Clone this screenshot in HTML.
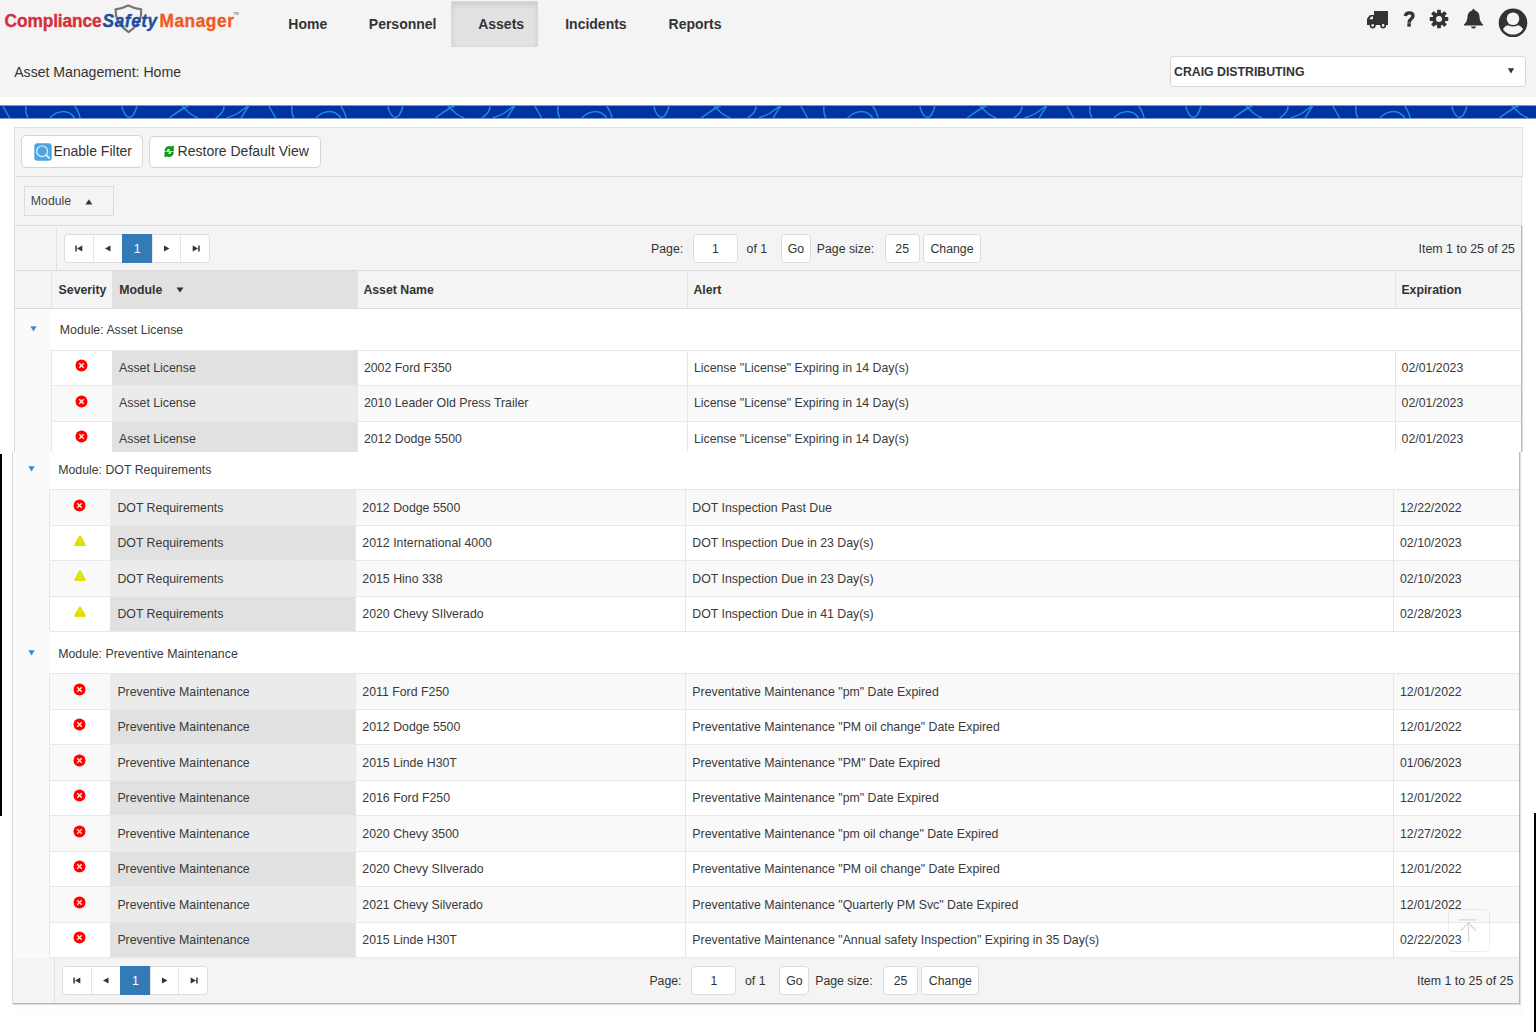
<!DOCTYPE html>
<html><head><meta charset="utf-8"><style>
html,body{margin:0;padding:0;width:1536px;height:1032px;overflow:hidden;background:#fff;}
.t{position:absolute;white-space:nowrap;line-height:20px;font-family:"Liberation Sans", sans-serif;}
.b{position:absolute;}
.seg{position:absolute;left:0;width:1536px;overflow:hidden;}
.inner{position:absolute;left:0;top:0;width:1536px;height:1100px;}
</style></head><body>
<div class="seg" style="top:0;height:452px">
<div class="inner">
<div class="b" style="left:0px;top:0px;width:1536px;height:97px;background:#f4f4f4"></div>
<svg class="b" style="left:112px;top:3px" width="34" height="33" viewBox="0 0 34 33">
<path d="M3.6 6.4 Q10 5.6 16.2 2.5 Q22.5 5.6 29.2 6.4 L29 12 Q28 21 16.6 29.2 Q5.2 21 4 12 Z" fill="none" stroke="#767676" stroke-width="2.2" stroke-linejoin="round"/>
</svg>
<div class="t " style="left:4.60px;top:11.11px;font-size:17.3px;font-weight:700;color:#d42f3d;letter-spacing:-0.1px;-webkit-text-stroke:0.35px #d42f3d;transform:scaleY(1.06);transform-origin:0 16px">Compliance</div>
<div class="t " style="left:102.60px;top:11.11px;font-size:17.3px;font-weight:700;color:#1d4f9f;font-style:italic;letter-spacing:0.55px;-webkit-text-stroke:0.35px #1d4f9f;transform:scaleY(1.06);transform-origin:0 16px">Safety</div>
<div class="t " style="left:159.50px;top:11.11px;font-size:17.3px;font-weight:700;color:#f05a23;letter-spacing:0.55px;-webkit-text-stroke:0.35px #f05a23;transform:scaleY(1.06);transform-origin:0 16px">Manager</div>
<div class="t " style="left:233.20px;top:4.28px;font-size:3.8px;font-weight:700;color:#888;">TM</div>
<div class="b" style="left:451px;top:1px;width:87px;height:46px;background:#e2e2e2;border:1px solid #dadada;box-sizing:border-box;box-shadow:inset 0 3px 5px rgba(0,0,0,0.1)"></div>
<div class="t " style="left:288.30px;top:14.05px;font-size:14px;font-weight:700;color:#333;">Home</div>
<div class="t " style="left:368.80px;top:14.05px;font-size:14px;font-weight:700;color:#333;">Personnel</div>
<div class="t " style="left:478.20px;top:14.05px;font-size:14px;font-weight:700;color:#333;">Assets</div>
<div class="t " style="left:565.20px;top:14.05px;font-size:14px;font-weight:700;color:#333;">Incidents</div>
<div class="t " style="left:668.60px;top:14.05px;font-size:14px;font-weight:700;color:#333;">Reports</div>
<svg class="b" style="left:1366px;top:10px" width="23" height="20" viewBox="0 0 23 20">
<path fill="#333" d="M8 1 H22 V15 H8 Z"/>
<path fill="#333" d="M8.5 5 H5 Q4 5 3.3 5.8 L1.2 8.5 Q1 9 1 9.6 V15 H8.5 Z"/>
<path fill="#f4f4f4" d="M7 6.6 H5.3 L3.2 9.3 H7 Z"/>
<circle cx="6.7" cy="15.4" r="3" fill="#333"/><circle cx="6.7" cy="15.4" r="1.3" fill="#f4f4f4"/>
<circle cx="17.1" cy="15.4" r="3" fill="#333"/><circle cx="17.1" cy="15.4" r="1.3" fill="#f4f4f4"/>
</svg>
<svg class="b" style="left:1403px;top:11px" width="13" height="17" viewBox="0 0 13 17">
<path fill="none" stroke="#333" stroke-width="3.4" d="M2.3 5 Q3 1.9 6.4 1.9 Q10 1.9 10 4.8 Q10 6.6 8.2 7.8 Q6.1 9.2 6.1 11.8"/>
<rect x="4.35" y="12.2" width="3.5" height="3.4" fill="#333"/>
</svg>
<svg class="b" style="left:1429px;top:9px" width="20" height="20" viewBox="0 0 20 20">
<g fill="#333" transform="translate(10 10)">
<circle r="6.6"/>
<rect x="-1.9" y="-9.3" width="3.8" height="18.6" rx="0.6"/>
<rect x="-1.9" y="-9.3" width="3.8" height="18.6" rx="0.6" transform="rotate(45)"/>
<rect x="-1.9" y="-9.3" width="3.8" height="18.6" rx="0.6" transform="rotate(90)"/>
<rect x="-1.9" y="-9.3" width="3.8" height="18.6" rx="0.6" transform="rotate(135)"/>
</g>
<circle cx="10" cy="10" r="3" fill="#f4f4f4"/>
</svg>
<svg class="b" style="left:1463px;top:8px" width="21" height="23" viewBox="0 0 21 23">
<path fill="#333" d="M10.5 0.8 Q11.6 0.8 11.8 2.4 Q16.3 3.6 16.5 8.5 Q16.6 13.6 20 16.6 V17.6 H1 V16.6 Q4.4 13.6 4.5 8.5 Q4.7 3.6 9.2 2.4 Q9.4 0.8 10.5 0.8 Z"/>
<path fill="#333" d="M8 18.4 H13 Q12.6 20.6 10.5 20.6 Q8.4 20.6 8 18.4 Z"/>
</svg>
<svg class="b" style="left:1498px;top:8px" width="30" height="30" viewBox="0 0 30 30">
<defs><clipPath id="uc"><circle cx="15" cy="14.8" r="11.8"/></clipPath></defs>
<circle cx="15" cy="14.8" r="14.3" fill="#333"/>
<g clip-path="url(#uc)">
<circle cx="15" cy="14.8" r="11.8" fill="#333"/>
<path fill="#f4f4f4" d="M3 30 Q3.5 18.5 10 17.2 Q15 19.6 20 17.2 Q26.5 18.5 27 30 Z"/>
</g>
<circle cx="15" cy="10.8" r="6.3" fill="#f4f4f4"/>
</svg>
<div class="t " style="left:14.20px;top:61.91px;font-size:14.1px;font-weight:400;color:#333;">Asset Management: Home</div>
<div class="b" style="left:1170px;top:56px;width:356px;height:31px;background:#fff;border:1px solid #d9d9d9;border-radius:3px;box-sizing:border-box"></div>
<div class="t " style="left:1174.00px;top:62.04px;font-size:12.3px;font-weight:700;color:#333;">CRAIG DISTRIBUTING</div>
<svg class="b" style="left:1507px;top:68px" width="8" height="6" viewBox="0 0 8 6"><path d="M0.8 0.3 H7.2 L4 5.6 Z" fill="#333"/></svg>
<svg class="b" style="left:0;top:105px" width="1536" height="14" viewBox="0 0 1536 14">
<defs><pattern id="bp" x="0" y="0" width="266" height="14" patternUnits="userSpaceOnUse">
<g fill="none" stroke="#2088e0" stroke-width="1.5">
<path d="M2.3 0 L9.6 13"/>
<path d="M26.3 0 Q24.6 6 27.8 13"/>
<path d="M49.7 13 Q56 6.6 63.8 6.6 Q70 6.6 74.7 13"/>
<path d="M74.3 0 Q78.5 6 80.2 13"/>
<path d="M121.7 0 Q123 8 127 11.5 Q130 13.5 133 10.5 Q136 6 137.2 0"/>
<path d="M169.2 13 Q178 6.5 184.7 2.5 L190.2 0"/>
<path d="M181 0 Q186 5 190 8.5 Q194 11.5 198.4 13"/>
<path d="M223.9 0 Q225 7 215.7 13"/>
<path d="M226.6 13 Q236 10 241 6 Q246 2.5 249.4 0"/>
<path d="M241.2 13 Q245 6 249.4 0"/>
</g></pattern></defs>
<rect x="0" y="0.5" width="1536" height="13" fill="#0033a0"/>
<rect x="0" y="0.5" width="1536" height="13" fill="url(#bp)"/>
</svg>
<div class="b" style="left:14px;top:127px;width:1509px;height:50px;background:#f4f4f4;border:1px solid #e2e2e2;border-bottom-color:#dcdcdc;box-sizing:border-box"></div>
<div class="b" style="left:21px;top:135px;width:122px;height:33px;background:#fff;border:1px solid #d4d4d4;border-radius:5px;box-sizing:border-box"></div>
<svg class="b" style="left:34px;top:143px" width="18" height="18" viewBox="0 0 18 18">
    <rect x="0.3" y="0.3" width="17.4" height="17.4" rx="3" fill="#4aa5e0"/>
    <circle cx="8.1" cy="8.3" r="5.4" fill="none" stroke="#cfe8f7" stroke-width="1.4"/>
    <path d="M12 12 L15.2 15" stroke="#d8ecf8" stroke-width="1.8" stroke-linecap="round"/>
    </svg>
<div class="t " style="left:53.40px;top:141.45px;font-size:14.0px;font-weight:400;color:#333;">Enable Filter</div>
<div class="b" style="left:149px;top:136px;width:172px;height:32px;background:#fff;border:1px solid #d4d4d4;border-radius:5px;box-sizing:border-box"></div>
<svg class="b" style="left:164px;top:145px" width="11" height="13" viewBox="0 0 11 13">
    <path d="M0.5 6.3 Q0.6 1.2 5.2 0.9 Q6.3 0.9 7 1.4 L9.8 0.6 V6.1 H4.6 L6.1 4.3 Q5.4 3.7 4.8 3.8 Q3 4 2.8 6.3 Z" fill="#0d9c14"/>
    <path d="M9.8 6.6 Q9.7 11.7 5.1 12 Q4 12 3.3 11.5 L0.5 12.3 V6.8 H5.7 L4.2 8.6 Q4.9 9.2 5.5 9.1 Q7.3 8.9 7.5 6.6 Z" fill="#0d9c14"/>
    </svg>
<div class="t " style="left:177.60px;top:141.45px;font-size:14.0px;font-weight:400;color:#333;">Restore Default View</div>
<div class="b" style="left:14px;top:177px;width:1508px;height:49px;background:#f4f4f4;border-left:1px solid #e2e2e2;border-right:1px solid #e6e6e6;box-sizing:border-box"></div>
<div class="b" style="left:24px;top:186px;width:90px;height:30px;background:#f4f4f4;border:1px solid #dcdcdc;box-sizing:border-box"></div>
<div class="t " style="left:30.80px;top:190.54px;font-size:12.3px;font-weight:400;color:#444;">Module</div>
<svg class="b" style="left:85px;top:199px" width="8" height="6" viewBox="0 0 8 6"><path d="M0.5 5.4 H7.3 L3.9 0.3 Z" fill="#333"/></svg>
<div class="b" style="left:14px;top:225px;width:1508px;height:788px;background:#fff;border:1px solid #dcdcdc;border-right-color:#b8b8b8;border-bottom-color:#b8b8b8;box-sizing:border-box;box-shadow:1px 1px 1px rgba(0,0,0,0.12)"></div>
<div class="b" style="left:15px;top:226px;width:1506px;height:44px;background:#f4f4f4"></div>
<div class="b" style="left:56px;top:227px;width:1px;height:43px;background:#e2e2e2"></div>
<div class="b" style="left:64px;top:234px;width:146px;height:29px;background:#fff;border:1px solid #dcdcdc;border-radius:4px;box-sizing:border-box"></div>
<div class="b" style="left:93px;top:235px;width:1px;height:27px;background:#e4e4e4"></div>
<div class="b" style="left:122px;top:235px;width:1px;height:27px;background:#e4e4e4"></div>
<div class="b" style="left:152px;top:235px;width:1px;height:27px;background:#e4e4e4"></div>
<div class="b" style="left:180px;top:235px;width:1px;height:27px;background:#e4e4e4"></div>
<div class="b" style="left:122px;top:234px;width:30px;height:29px;background:#337ab7"></div>
<svg class="b" style="left:75px;top:245.0px" width="8" height="7" viewBox="0 0 8 7"><rect x="0.3" y="0.5" width="1.5" height="6" fill="#333"/><path d="M7.3 0.5 V6.5 L2 3.5 Z" fill="#333"/></svg>
<svg class="b" style="left:104px;top:245.0px" width="8" height="7" viewBox="0 0 8 7"><path d="M6.5 0.5 V6.5 L1 3.5 Z" fill="#333"/></svg>
<svg class="b" style="left:162.5px;top:245.0px" width="8" height="7" viewBox="0 0 8 7"><path d="M1 0.5 V6.5 L6.5 3.5 Z" fill="#333"/></svg>
<svg class="b" style="left:191.5px;top:245.0px" width="9" height="7" viewBox="0 0 9 7"><path d="M0.7 0.5 V6.5 L6 3.5 Z" fill="#333"/><rect x="6.2" y="0.5" width="1.5" height="6" fill="#333"/></svg>
<div class="t" style="left:37.10px;width:200px;text-align:center;top:238.54px;font-size:12.3px;font-weight:400;color:#fff;">1</div>
<div class="t " style="left:651.00px;top:238.54px;font-size:12.3px;font-weight:400;color:#333;">Page:</div>
<div class="b" style="left:693px;top:234px;width:45px;height:29px;background:#fff;border:1px solid #dcdcdc;border-radius:4px;box-sizing:border-box"></div>
<div class="t" style="left:615.50px;width:200px;text-align:center;top:238.54px;font-size:12.3px;font-weight:400;color:#333;">1</div>
<div class="t " style="left:746.60px;top:238.54px;font-size:12.3px;font-weight:400;color:#333;">of 1</div>
<div class="b" style="left:781px;top:234px;width:30px;height:29px;background:#fff;border:1px solid #dcdcdc;border-radius:4px;box-sizing:border-box"></div>
<div class="t" style="left:696.00px;width:200px;text-align:center;top:238.54px;font-size:12.3px;font-weight:400;color:#333;">Go</div>
<div class="t " style="left:816.80px;top:238.54px;font-size:12.3px;font-weight:400;color:#333;">Page size:</div>
<div class="b" style="left:885px;top:234px;width:35px;height:29px;background:#fff;border:1px solid #dcdcdc;border-radius:4px;box-sizing:border-box"></div>
<div class="t" style="left:802.20px;width:200px;text-align:center;top:238.54px;font-size:12.3px;font-weight:400;color:#333;">25</div>
<div class="b" style="left:923px;top:234px;width:58px;height:29px;background:#fff;border:1px solid #dcdcdc;border-radius:4px;box-sizing:border-box"></div>
<div class="t" style="left:852.00px;width:200px;text-align:center;top:238.54px;font-size:12.3px;font-weight:400;color:#333;">Change</div>
<div class="t" style="right:21.00px;top:238.50px;font-size:12.4px;font-weight:400;color:#333;">Item 1 to 25 of 25</div>
<div class="b" style="left:15px;top:270px;width:1506px;height:1px;background:#dcdcdc"></div>
<div class="b" style="left:15px;top:271px;width:1506px;height:37px;background:#f4f4f4"></div>
<div class="b" style="left:112px;top:271px;width:245px;height:37px;background:#e1e1e1"></div>
<div class="b" style="left:51px;top:271px;width:1px;height:37px;background:#e3e3e3"></div>
<div class="b" style="left:357px;top:271px;width:1px;height:37px;background:#e3e3e3"></div>
<div class="b" style="left:687px;top:271px;width:1px;height:37px;background:#e3e3e3"></div>
<div class="b" style="left:1395px;top:271px;width:1px;height:37px;background:#e3e3e3"></div>
<div class="b" style="left:15px;top:308px;width:1506px;height:1px;background:#dadada"></div>
<div class="t " style="left:58.60px;top:280.14px;font-size:12.3px;font-weight:700;color:#333;">Severity</div>
<div class="t " style="left:119.20px;top:280.14px;font-size:12.3px;font-weight:700;color:#333;">Module</div>
<svg class="b" style="left:176px;top:287px" width="8" height="6" viewBox="0 0 8 6"><path d="M0.5 0.5 H7.5 L4 5.6 Z" fill="#333"/></svg>
<div class="t " style="left:363.40px;top:280.14px;font-size:12.3px;font-weight:700;color:#333;">Asset Name</div>
<div class="t " style="left:693.40px;top:280.14px;font-size:12.3px;font-weight:700;color:#333;">Alert</div>
<div class="t " style="left:1401.40px;top:280.14px;font-size:12.3px;font-weight:700;color:#333;">Expiration</div>
<div class="b" style="left:15px;top:309px;width:36px;height:658px;background:#fafafa"></div>
<div class="b" style="left:52px;top:309px;width:1469px;height:41px;background:#fff"></div>
<div class="b" style="left:52px;top:350px;width:1469px;height:1px;background:#e6e6e6"></div>
<svg class="b" style="left:30px;top:326.2px" width="7" height="6" viewBox="0 0 7 6"><path d="M0.3 0.3 H6.7 L3.5 5.5 Z" fill="#428bca"/></svg>
<div class="t " style="left:59.80px;top:320.13px;font-size:12.33px;font-weight:400;color:#3a3a3a;">Module: Asset License</div>
<div class="b" style="left:52px;top:351px;width:1469px;height:34px;background:#fff"></div>
<div class="b" style="left:112px;top:351px;width:245px;height:34px;background:#e1e1e1"></div>
<div class="b" style="left:51px;top:350px;width:1px;height:35px;background:#e6e6e6"></div>
<div class="b" style="left:357px;top:350px;width:1px;height:35px;background:#e6e6e6"></div>
<div class="b" style="left:687px;top:350px;width:1px;height:35px;background:#e6e6e6"></div>
<div class="b" style="left:1395px;top:350px;width:1px;height:35px;background:#e6e6e6"></div>
<div class="b" style="left:52px;top:385px;width:1469px;height:1px;background:#e8e8e8"></div>
<svg class="b" style="left:75.0px;top:359.0px" width="13" height="13" viewBox="0 0 13 13"><circle cx="6.5" cy="6.5" r="6" fill="#ff0000"/><path d="M4.3 4.3 L8.7 8.7 M8.7 4.3 L4.3 8.7" stroke="#ffe8e8" stroke-width="1.4"/></svg>
<div class="t " style="left:119.00px;top:357.53px;font-size:12.33px;font-weight:400;color:#3a3a3a;">Asset License</div>
<div class="t " style="left:363.90px;top:357.53px;font-size:12.33px;font-weight:400;color:#3a3a3a;">2002 Ford F350</div>
<div class="t " style="left:693.90px;top:357.53px;font-size:12.33px;font-weight:400;color:#3a3a3a;">License "License" Expiring in 14 Day(s)</div>
<div class="t " style="left:1401.60px;top:357.53px;font-size:12.33px;font-weight:400;color:#3a3a3a;">02/01/2023</div>
<div class="b" style="left:52px;top:386px;width:1469px;height:35px;background:#f9f9f9"></div>
<div class="b" style="left:112px;top:386px;width:245px;height:35px;background:#ebebeb"></div>
<div class="b" style="left:51px;top:385px;width:1px;height:36px;background:#e6e6e6"></div>
<div class="b" style="left:357px;top:385px;width:1px;height:36px;background:#e6e6e6"></div>
<div class="b" style="left:687px;top:385px;width:1px;height:36px;background:#e6e6e6"></div>
<div class="b" style="left:1395px;top:385px;width:1px;height:36px;background:#e6e6e6"></div>
<div class="b" style="left:52px;top:421px;width:1469px;height:1px;background:#e8e8e8"></div>
<svg class="b" style="left:75.0px;top:394.5px" width="13" height="13" viewBox="0 0 13 13"><circle cx="6.5" cy="6.5" r="6" fill="#ff0000"/><path d="M4.3 4.3 L8.7 8.7 M8.7 4.3 L4.3 8.7" stroke="#ffe8e8" stroke-width="1.4"/></svg>
<div class="t " style="left:119.00px;top:393.03px;font-size:12.33px;font-weight:400;color:#3a3a3a;">Asset License</div>
<div class="t " style="left:363.90px;top:393.03px;font-size:12.33px;font-weight:400;color:#3a3a3a;">2010 Leader Old Press Trailer</div>
<div class="t " style="left:693.90px;top:393.03px;font-size:12.33px;font-weight:400;color:#3a3a3a;">License "License" Expiring in 14 Day(s)</div>
<div class="t " style="left:1401.60px;top:393.03px;font-size:12.33px;font-weight:400;color:#3a3a3a;">02/01/2023</div>
<div class="b" style="left:52px;top:422px;width:1469px;height:34px;background:#fff"></div>
<div class="b" style="left:112px;top:422px;width:245px;height:34px;background:#e1e1e1"></div>
<div class="b" style="left:51px;top:421px;width:1px;height:35px;background:#e6e6e6"></div>
<div class="b" style="left:357px;top:421px;width:1px;height:35px;background:#e6e6e6"></div>
<div class="b" style="left:687px;top:421px;width:1px;height:35px;background:#e6e6e6"></div>
<div class="b" style="left:1395px;top:421px;width:1px;height:35px;background:#e6e6e6"></div>
<div class="b" style="left:52px;top:456px;width:1469px;height:1px;background:#e8e8e8"></div>
<svg class="b" style="left:75.0px;top:430.0px" width="13" height="13" viewBox="0 0 13 13"><circle cx="6.5" cy="6.5" r="6" fill="#ff0000"/><path d="M4.3 4.3 L8.7 8.7 M8.7 4.3 L4.3 8.7" stroke="#ffe8e8" stroke-width="1.4"/></svg>
<div class="t " style="left:119.00px;top:428.53px;font-size:12.33px;font-weight:400;color:#3a3a3a;">Asset License</div>
<div class="t " style="left:363.90px;top:428.53px;font-size:12.33px;font-weight:400;color:#3a3a3a;">2012 Dodge 5500</div>
<div class="t " style="left:693.90px;top:428.53px;font-size:12.33px;font-weight:400;color:#3a3a3a;">License "License" Expiring in 14 Day(s)</div>
<div class="t " style="left:1401.60px;top:428.53px;font-size:12.33px;font-weight:400;color:#3a3a3a;">02/01/2023</div>
<div class="b" style="left:52px;top:457px;width:1469px;height:41px;background:#fff"></div>
<div class="b" style="left:52px;top:498px;width:1469px;height:1px;background:#e6e6e6"></div>
<svg class="b" style="left:30px;top:474.7px" width="7" height="6" viewBox="0 0 7 6"><path d="M0.3 0.3 H6.7 L3.5 5.5 Z" fill="#428bca"/></svg>
<div class="t " style="left:59.80px;top:468.63px;font-size:12.33px;font-weight:400;color:#3a3a3a;">Module: DOT Requirements</div>
<div class="b" style="left:52px;top:499px;width:1469px;height:35px;background:#f9f9f9"></div>
<div class="b" style="left:112px;top:499px;width:245px;height:35px;background:#ebebeb"></div>
<div class="b" style="left:51px;top:498px;width:1px;height:36px;background:#e6e6e6"></div>
<div class="b" style="left:357px;top:498px;width:1px;height:36px;background:#e6e6e6"></div>
<div class="b" style="left:687px;top:498px;width:1px;height:36px;background:#e6e6e6"></div>
<div class="b" style="left:1395px;top:498px;width:1px;height:36px;background:#e6e6e6"></div>
<div class="b" style="left:52px;top:534px;width:1469px;height:1px;background:#e8e8e8"></div>
<svg class="b" style="left:75.0px;top:507.5px" width="13" height="13" viewBox="0 0 13 13"><circle cx="6.5" cy="6.5" r="6" fill="#ff0000"/><path d="M4.3 4.3 L8.7 8.7 M8.7 4.3 L4.3 8.7" stroke="#ffe8e8" stroke-width="1.4"/></svg>
<div class="t " style="left:119.00px;top:506.03px;font-size:12.33px;font-weight:400;color:#3a3a3a;">DOT Requirements</div>
<div class="t " style="left:363.90px;top:506.03px;font-size:12.33px;font-weight:400;color:#3a3a3a;">2012 Dodge 5500</div>
<div class="t " style="left:693.90px;top:506.03px;font-size:12.33px;font-weight:400;color:#3a3a3a;">DOT Inspection Past Due</div>
<div class="t " style="left:1401.60px;top:506.03px;font-size:12.33px;font-weight:400;color:#3a3a3a;">12/22/2022</div>
<div class="b" style="left:52px;top:535px;width:1469px;height:34px;background:#fff"></div>
<div class="b" style="left:112px;top:535px;width:245px;height:34px;background:#e1e1e1"></div>
<div class="b" style="left:51px;top:534px;width:1px;height:35px;background:#e6e6e6"></div>
<div class="b" style="left:357px;top:534px;width:1px;height:35px;background:#e6e6e6"></div>
<div class="b" style="left:687px;top:534px;width:1px;height:35px;background:#e6e6e6"></div>
<div class="b" style="left:1395px;top:534px;width:1px;height:35px;background:#e6e6e6"></div>
<div class="b" style="left:52px;top:569px;width:1469px;height:1px;background:#e8e8e8"></div>
<svg class="b" style="left:75.4px;top:543.6px" width="13" height="12" viewBox="0 0 13 12"><path d="M6 0.6 Q6.8 0.6 7.3 1.5 L11.6 9.2 Q12.4 10.9 10.6 10.9 H1.4 Q-0.4 10.9 0.4 9.2 L4.7 1.5 Q5.2 0.6 6 0.6 Z" fill="#e0e000"/><rect x="5.5" y="3.6" width="1" height="3.6" fill="#e8e860"/></svg>
<div class="t " style="left:119.00px;top:541.53px;font-size:12.33px;font-weight:400;color:#3a3a3a;">DOT Requirements</div>
<div class="t " style="left:363.90px;top:541.53px;font-size:12.33px;font-weight:400;color:#3a3a3a;">2012 International 4000</div>
<div class="t " style="left:693.90px;top:541.53px;font-size:12.33px;font-weight:400;color:#3a3a3a;">DOT Inspection Due in 23 Day(s)</div>
<div class="t " style="left:1401.60px;top:541.53px;font-size:12.33px;font-weight:400;color:#3a3a3a;">02/10/2023</div>
<div class="b" style="left:52px;top:570px;width:1469px;height:35px;background:#f9f9f9"></div>
<div class="b" style="left:112px;top:570px;width:245px;height:35px;background:#ebebeb"></div>
<div class="b" style="left:51px;top:569px;width:1px;height:36px;background:#e6e6e6"></div>
<div class="b" style="left:357px;top:569px;width:1px;height:36px;background:#e6e6e6"></div>
<div class="b" style="left:687px;top:569px;width:1px;height:36px;background:#e6e6e6"></div>
<div class="b" style="left:1395px;top:569px;width:1px;height:36px;background:#e6e6e6"></div>
<div class="b" style="left:52px;top:605px;width:1469px;height:1px;background:#e8e8e8"></div>
<svg class="b" style="left:75.4px;top:579.1px" width="13" height="12" viewBox="0 0 13 12"><path d="M6 0.6 Q6.8 0.6 7.3 1.5 L11.6 9.2 Q12.4 10.9 10.6 10.9 H1.4 Q-0.4 10.9 0.4 9.2 L4.7 1.5 Q5.2 0.6 6 0.6 Z" fill="#e0e000"/><rect x="5.5" y="3.6" width="1" height="3.6" fill="#e8e860"/></svg>
<div class="t " style="left:119.00px;top:577.03px;font-size:12.33px;font-weight:400;color:#3a3a3a;">DOT Requirements</div>
<div class="t " style="left:363.90px;top:577.03px;font-size:12.33px;font-weight:400;color:#3a3a3a;">2015 Hino 338</div>
<div class="t " style="left:693.90px;top:577.03px;font-size:12.33px;font-weight:400;color:#3a3a3a;">DOT Inspection Due in 23 Day(s)</div>
<div class="t " style="left:1401.60px;top:577.03px;font-size:12.33px;font-weight:400;color:#3a3a3a;">02/10/2023</div>
<div class="b" style="left:52px;top:606px;width:1469px;height:34px;background:#fff"></div>
<div class="b" style="left:112px;top:606px;width:245px;height:34px;background:#e1e1e1"></div>
<div class="b" style="left:51px;top:605px;width:1px;height:35px;background:#e6e6e6"></div>
<div class="b" style="left:357px;top:605px;width:1px;height:35px;background:#e6e6e6"></div>
<div class="b" style="left:687px;top:605px;width:1px;height:35px;background:#e6e6e6"></div>
<div class="b" style="left:1395px;top:605px;width:1px;height:35px;background:#e6e6e6"></div>
<div class="b" style="left:52px;top:640px;width:1469px;height:1px;background:#e8e8e8"></div>
<svg class="b" style="left:75.4px;top:614.6px" width="13" height="12" viewBox="0 0 13 12"><path d="M6 0.6 Q6.8 0.6 7.3 1.5 L11.6 9.2 Q12.4 10.9 10.6 10.9 H1.4 Q-0.4 10.9 0.4 9.2 L4.7 1.5 Q5.2 0.6 6 0.6 Z" fill="#e0e000"/><rect x="5.5" y="3.6" width="1" height="3.6" fill="#e8e860"/></svg>
<div class="t " style="left:119.00px;top:612.53px;font-size:12.33px;font-weight:400;color:#3a3a3a;">DOT Requirements</div>
<div class="t " style="left:363.90px;top:612.53px;font-size:12.33px;font-weight:400;color:#3a3a3a;">2020 Chevy SIlverado</div>
<div class="t " style="left:693.90px;top:612.53px;font-size:12.33px;font-weight:400;color:#3a3a3a;">DOT Inspection Due in 41 Day(s)</div>
<div class="t " style="left:1401.60px;top:612.53px;font-size:12.33px;font-weight:400;color:#3a3a3a;">02/28/2023</div>
<div class="b" style="left:52px;top:641px;width:1469px;height:41px;background:#fff"></div>
<div class="b" style="left:52px;top:682px;width:1469px;height:1px;background:#e6e6e6"></div>
<svg class="b" style="left:30px;top:658.7px" width="7" height="6" viewBox="0 0 7 6"><path d="M0.3 0.3 H6.7 L3.5 5.5 Z" fill="#428bca"/></svg>
<div class="t " style="left:59.80px;top:652.63px;font-size:12.33px;font-weight:400;color:#3a3a3a;">Module: Preventive Maintenance</div>
<div class="b" style="left:52px;top:683px;width:1469px;height:35px;background:#f9f9f9"></div>
<div class="b" style="left:112px;top:683px;width:245px;height:35px;background:#ebebeb"></div>
<div class="b" style="left:51px;top:682px;width:1px;height:36px;background:#e6e6e6"></div>
<div class="b" style="left:357px;top:682px;width:1px;height:36px;background:#e6e6e6"></div>
<div class="b" style="left:687px;top:682px;width:1px;height:36px;background:#e6e6e6"></div>
<div class="b" style="left:1395px;top:682px;width:1px;height:36px;background:#e6e6e6"></div>
<div class="b" style="left:52px;top:718px;width:1469px;height:1px;background:#e8e8e8"></div>
<svg class="b" style="left:75.0px;top:691.5px" width="13" height="13" viewBox="0 0 13 13"><circle cx="6.5" cy="6.5" r="6" fill="#ff0000"/><path d="M4.3 4.3 L8.7 8.7 M8.7 4.3 L4.3 8.7" stroke="#ffe8e8" stroke-width="1.4"/></svg>
<div class="t " style="left:119.00px;top:690.03px;font-size:12.33px;font-weight:400;color:#3a3a3a;">Preventive Maintenance</div>
<div class="t " style="left:363.90px;top:690.03px;font-size:12.33px;font-weight:400;color:#3a3a3a;">2011 Ford F250</div>
<div class="t " style="left:693.90px;top:690.03px;font-size:12.33px;font-weight:400;color:#3a3a3a;">Preventative Maintenance "pm" Date Expired</div>
<div class="t " style="left:1401.60px;top:690.03px;font-size:12.33px;font-weight:400;color:#3a3a3a;">12/01/2022</div>
<div class="b" style="left:52px;top:719px;width:1469px;height:34px;background:#fff"></div>
<div class="b" style="left:112px;top:719px;width:245px;height:34px;background:#e1e1e1"></div>
<div class="b" style="left:51px;top:718px;width:1px;height:35px;background:#e6e6e6"></div>
<div class="b" style="left:357px;top:718px;width:1px;height:35px;background:#e6e6e6"></div>
<div class="b" style="left:687px;top:718px;width:1px;height:35px;background:#e6e6e6"></div>
<div class="b" style="left:1395px;top:718px;width:1px;height:35px;background:#e6e6e6"></div>
<div class="b" style="left:52px;top:753px;width:1469px;height:1px;background:#e8e8e8"></div>
<svg class="b" style="left:75.0px;top:727.0px" width="13" height="13" viewBox="0 0 13 13"><circle cx="6.5" cy="6.5" r="6" fill="#ff0000"/><path d="M4.3 4.3 L8.7 8.7 M8.7 4.3 L4.3 8.7" stroke="#ffe8e8" stroke-width="1.4"/></svg>
<div class="t " style="left:119.00px;top:725.53px;font-size:12.33px;font-weight:400;color:#3a3a3a;">Preventive Maintenance</div>
<div class="t " style="left:363.90px;top:725.53px;font-size:12.33px;font-weight:400;color:#3a3a3a;">2012 Dodge 5500</div>
<div class="t " style="left:693.90px;top:725.53px;font-size:12.33px;font-weight:400;color:#3a3a3a;">Preventative Maintenance "PM oil change" Date Expired</div>
<div class="t " style="left:1401.60px;top:725.53px;font-size:12.33px;font-weight:400;color:#3a3a3a;">12/01/2022</div>
<div class="b" style="left:52px;top:754px;width:1469px;height:35px;background:#f9f9f9"></div>
<div class="b" style="left:112px;top:754px;width:245px;height:35px;background:#ebebeb"></div>
<div class="b" style="left:51px;top:753px;width:1px;height:36px;background:#e6e6e6"></div>
<div class="b" style="left:357px;top:753px;width:1px;height:36px;background:#e6e6e6"></div>
<div class="b" style="left:687px;top:753px;width:1px;height:36px;background:#e6e6e6"></div>
<div class="b" style="left:1395px;top:753px;width:1px;height:36px;background:#e6e6e6"></div>
<div class="b" style="left:52px;top:789px;width:1469px;height:1px;background:#e8e8e8"></div>
<svg class="b" style="left:75.0px;top:762.5px" width="13" height="13" viewBox="0 0 13 13"><circle cx="6.5" cy="6.5" r="6" fill="#ff0000"/><path d="M4.3 4.3 L8.7 8.7 M8.7 4.3 L4.3 8.7" stroke="#ffe8e8" stroke-width="1.4"/></svg>
<div class="t " style="left:119.00px;top:761.03px;font-size:12.33px;font-weight:400;color:#3a3a3a;">Preventive Maintenance</div>
<div class="t " style="left:363.90px;top:761.03px;font-size:12.33px;font-weight:400;color:#3a3a3a;">2015 Linde H30T</div>
<div class="t " style="left:693.90px;top:761.03px;font-size:12.33px;font-weight:400;color:#3a3a3a;">Preventative Maintenance "PM" Date Expired</div>
<div class="t " style="left:1401.60px;top:761.03px;font-size:12.33px;font-weight:400;color:#3a3a3a;">01/06/2023</div>
<div class="b" style="left:52px;top:790px;width:1469px;height:34px;background:#fff"></div>
<div class="b" style="left:112px;top:790px;width:245px;height:34px;background:#e1e1e1"></div>
<div class="b" style="left:51px;top:789px;width:1px;height:35px;background:#e6e6e6"></div>
<div class="b" style="left:357px;top:789px;width:1px;height:35px;background:#e6e6e6"></div>
<div class="b" style="left:687px;top:789px;width:1px;height:35px;background:#e6e6e6"></div>
<div class="b" style="left:1395px;top:789px;width:1px;height:35px;background:#e6e6e6"></div>
<div class="b" style="left:52px;top:824px;width:1469px;height:1px;background:#e8e8e8"></div>
<svg class="b" style="left:75.0px;top:798.0px" width="13" height="13" viewBox="0 0 13 13"><circle cx="6.5" cy="6.5" r="6" fill="#ff0000"/><path d="M4.3 4.3 L8.7 8.7 M8.7 4.3 L4.3 8.7" stroke="#ffe8e8" stroke-width="1.4"/></svg>
<div class="t " style="left:119.00px;top:796.53px;font-size:12.33px;font-weight:400;color:#3a3a3a;">Preventive Maintenance</div>
<div class="t " style="left:363.90px;top:796.53px;font-size:12.33px;font-weight:400;color:#3a3a3a;">2016 Ford F250</div>
<div class="t " style="left:693.90px;top:796.53px;font-size:12.33px;font-weight:400;color:#3a3a3a;">Preventative Maintenance "pm" Date Expired</div>
<div class="t " style="left:1401.60px;top:796.53px;font-size:12.33px;font-weight:400;color:#3a3a3a;">12/01/2022</div>
<div class="b" style="left:52px;top:825px;width:1469px;height:35px;background:#f9f9f9"></div>
<div class="b" style="left:112px;top:825px;width:245px;height:35px;background:#ebebeb"></div>
<div class="b" style="left:51px;top:824px;width:1px;height:36px;background:#e6e6e6"></div>
<div class="b" style="left:357px;top:824px;width:1px;height:36px;background:#e6e6e6"></div>
<div class="b" style="left:687px;top:824px;width:1px;height:36px;background:#e6e6e6"></div>
<div class="b" style="left:1395px;top:824px;width:1px;height:36px;background:#e6e6e6"></div>
<div class="b" style="left:52px;top:860px;width:1469px;height:1px;background:#e8e8e8"></div>
<svg class="b" style="left:75.0px;top:833.5px" width="13" height="13" viewBox="0 0 13 13"><circle cx="6.5" cy="6.5" r="6" fill="#ff0000"/><path d="M4.3 4.3 L8.7 8.7 M8.7 4.3 L4.3 8.7" stroke="#ffe8e8" stroke-width="1.4"/></svg>
<div class="t " style="left:119.00px;top:832.03px;font-size:12.33px;font-weight:400;color:#3a3a3a;">Preventive Maintenance</div>
<div class="t " style="left:363.90px;top:832.03px;font-size:12.33px;font-weight:400;color:#3a3a3a;">2020 Chevy 3500</div>
<div class="t " style="left:693.90px;top:832.03px;font-size:12.33px;font-weight:400;color:#3a3a3a;">Preventative Maintenance "pm oil change" Date Expired</div>
<div class="t " style="left:1401.60px;top:832.03px;font-size:12.33px;font-weight:400;color:#3a3a3a;">12/27/2022</div>
<div class="b" style="left:52px;top:861px;width:1469px;height:34px;background:#fff"></div>
<div class="b" style="left:112px;top:861px;width:245px;height:34px;background:#e1e1e1"></div>
<div class="b" style="left:51px;top:860px;width:1px;height:35px;background:#e6e6e6"></div>
<div class="b" style="left:357px;top:860px;width:1px;height:35px;background:#e6e6e6"></div>
<div class="b" style="left:687px;top:860px;width:1px;height:35px;background:#e6e6e6"></div>
<div class="b" style="left:1395px;top:860px;width:1px;height:35px;background:#e6e6e6"></div>
<div class="b" style="left:52px;top:895px;width:1469px;height:1px;background:#e8e8e8"></div>
<svg class="b" style="left:75.0px;top:869.0px" width="13" height="13" viewBox="0 0 13 13"><circle cx="6.5" cy="6.5" r="6" fill="#ff0000"/><path d="M4.3 4.3 L8.7 8.7 M8.7 4.3 L4.3 8.7" stroke="#ffe8e8" stroke-width="1.4"/></svg>
<div class="t " style="left:119.00px;top:867.53px;font-size:12.33px;font-weight:400;color:#3a3a3a;">Preventive Maintenance</div>
<div class="t " style="left:363.90px;top:867.53px;font-size:12.33px;font-weight:400;color:#3a3a3a;">2020 Chevy SIlverado</div>
<div class="t " style="left:693.90px;top:867.53px;font-size:12.33px;font-weight:400;color:#3a3a3a;">Preventative Maintenance "PM oil change" Date Expired</div>
<div class="t " style="left:1401.60px;top:867.53px;font-size:12.33px;font-weight:400;color:#3a3a3a;">12/01/2022</div>
<div class="b" style="left:52px;top:896px;width:1469px;height:35px;background:#f9f9f9"></div>
<div class="b" style="left:112px;top:896px;width:245px;height:35px;background:#ebebeb"></div>
<div class="b" style="left:51px;top:895px;width:1px;height:36px;background:#e6e6e6"></div>
<div class="b" style="left:357px;top:895px;width:1px;height:36px;background:#e6e6e6"></div>
<div class="b" style="left:687px;top:895px;width:1px;height:36px;background:#e6e6e6"></div>
<div class="b" style="left:1395px;top:895px;width:1px;height:36px;background:#e6e6e6"></div>
<div class="b" style="left:52px;top:931px;width:1469px;height:1px;background:#e8e8e8"></div>
<svg class="b" style="left:75.0px;top:904.5px" width="13" height="13" viewBox="0 0 13 13"><circle cx="6.5" cy="6.5" r="6" fill="#ff0000"/><path d="M4.3 4.3 L8.7 8.7 M8.7 4.3 L4.3 8.7" stroke="#ffe8e8" stroke-width="1.4"/></svg>
<div class="t " style="left:119.00px;top:903.03px;font-size:12.33px;font-weight:400;color:#3a3a3a;">Preventive Maintenance</div>
<div class="t " style="left:363.90px;top:903.03px;font-size:12.33px;font-weight:400;color:#3a3a3a;">2021 Chevy Silverado</div>
<div class="t " style="left:693.90px;top:903.03px;font-size:12.33px;font-weight:400;color:#3a3a3a;">Preventative Maintenance "Quarterly PM Svc" Date Expired</div>
<div class="t " style="left:1401.60px;top:903.03px;font-size:12.33px;font-weight:400;color:#3a3a3a;">12/01/2022</div>
<div class="b" style="left:52px;top:932px;width:1469px;height:34px;background:#fff"></div>
<div class="b" style="left:112px;top:932px;width:245px;height:34px;background:#e1e1e1"></div>
<div class="b" style="left:51px;top:931px;width:1px;height:35px;background:#e6e6e6"></div>
<div class="b" style="left:357px;top:931px;width:1px;height:35px;background:#e6e6e6"></div>
<div class="b" style="left:687px;top:931px;width:1px;height:35px;background:#e6e6e6"></div>
<div class="b" style="left:1395px;top:931px;width:1px;height:35px;background:#e6e6e6"></div>
<div class="b" style="left:52px;top:966px;width:1469px;height:1px;background:#e8e8e8"></div>
<svg class="b" style="left:75.0px;top:940.0px" width="13" height="13" viewBox="0 0 13 13"><circle cx="6.5" cy="6.5" r="6" fill="#ff0000"/><path d="M4.3 4.3 L8.7 8.7 M8.7 4.3 L4.3 8.7" stroke="#ffe8e8" stroke-width="1.4"/></svg>
<div class="t " style="left:119.00px;top:938.53px;font-size:12.33px;font-weight:400;color:#3a3a3a;">Preventive Maintenance</div>
<div class="t " style="left:363.90px;top:938.53px;font-size:12.33px;font-weight:400;color:#3a3a3a;">2015 Linde H30T</div>
<div class="t " style="left:693.90px;top:938.53px;font-size:12.33px;font-weight:400;color:#3a3a3a;">Preventative Maintenance "Annual safety Inspection" Expiring in 35 Day(s)</div>
<div class="t " style="left:1401.60px;top:938.53px;font-size:12.33px;font-weight:400;color:#3a3a3a;">02/22/2023</div>
<div class="b" style="left:15px;top:967px;width:1506px;height:45px;background:#f4f4f4"></div>
<div class="b" style="left:56px;top:968px;width:1px;height:44px;background:#e2e2e2"></div>
<div class="b" style="left:64px;top:975px;width:146px;height:29px;background:#fff;border:1px solid #dcdcdc;border-radius:4px;box-sizing:border-box"></div>
<div class="b" style="left:93px;top:976px;width:1px;height:27px;background:#e4e4e4"></div>
<div class="b" style="left:122px;top:976px;width:1px;height:27px;background:#e4e4e4"></div>
<div class="b" style="left:152px;top:976px;width:1px;height:27px;background:#e4e4e4"></div>
<div class="b" style="left:180px;top:976px;width:1px;height:27px;background:#e4e4e4"></div>
<div class="b" style="left:122px;top:975px;width:30px;height:29px;background:#337ab7"></div>
<svg class="b" style="left:75px;top:986.0px" width="8" height="7" viewBox="0 0 8 7"><rect x="0.3" y="0.5" width="1.5" height="6" fill="#333"/><path d="M7.3 0.5 V6.5 L2 3.5 Z" fill="#333"/></svg>
<svg class="b" style="left:104px;top:986.0px" width="8" height="7" viewBox="0 0 8 7"><path d="M6.5 0.5 V6.5 L1 3.5 Z" fill="#333"/></svg>
<svg class="b" style="left:162.5px;top:986.0px" width="8" height="7" viewBox="0 0 8 7"><path d="M1 0.5 V6.5 L6.5 3.5 Z" fill="#333"/></svg>
<svg class="b" style="left:191.5px;top:986.0px" width="9" height="7" viewBox="0 0 9 7"><path d="M0.7 0.5 V6.5 L6 3.5 Z" fill="#333"/><rect x="6.2" y="0.5" width="1.5" height="6" fill="#333"/></svg>
<div class="t" style="left:37.10px;width:200px;text-align:center;top:979.54px;font-size:12.3px;font-weight:400;color:#fff;">1</div>
<div class="t " style="left:651.00px;top:979.54px;font-size:12.3px;font-weight:400;color:#333;">Page:</div>
<div class="b" style="left:693px;top:975px;width:45px;height:29px;background:#fff;border:1px solid #dcdcdc;border-radius:4px;box-sizing:border-box"></div>
<div class="t" style="left:615.50px;width:200px;text-align:center;top:979.54px;font-size:12.3px;font-weight:400;color:#333;">1</div>
<div class="t " style="left:746.60px;top:979.54px;font-size:12.3px;font-weight:400;color:#333;">of 1</div>
<div class="b" style="left:781px;top:975px;width:30px;height:29px;background:#fff;border:1px solid #dcdcdc;border-radius:4px;box-sizing:border-box"></div>
<div class="t" style="left:696.00px;width:200px;text-align:center;top:979.54px;font-size:12.3px;font-weight:400;color:#333;">Go</div>
<div class="t " style="left:816.80px;top:979.54px;font-size:12.3px;font-weight:400;color:#333;">Page size:</div>
<div class="b" style="left:885px;top:975px;width:35px;height:29px;background:#fff;border:1px solid #dcdcdc;border-radius:4px;box-sizing:border-box"></div>
<div class="t" style="left:802.20px;width:200px;text-align:center;top:979.54px;font-size:12.3px;font-weight:400;color:#333;">25</div>
<div class="b" style="left:923px;top:975px;width:58px;height:29px;background:#fff;border:1px solid #dcdcdc;border-radius:4px;box-sizing:border-box"></div>
<div class="t" style="left:852.00px;width:200px;text-align:center;top:979.54px;font-size:12.3px;font-weight:400;color:#333;">Change</div>
<div class="t" style="right:21.00px;top:979.50px;font-size:12.4px;font-weight:400;color:#333;">Item 1 to 25 of 25</div>
</div></div>
<div class="seg" style="top:452px;height:580px">
<div class="inner" style="left:-2px;top:-461px">
<div class="b" style="left:14px;top:127px;width:1509px;height:50px;background:#f4f4f4;border:1px solid #e2e2e2;border-bottom-color:#dcdcdc;box-sizing:border-box"></div>
<div class="b" style="left:21px;top:135px;width:122px;height:33px;background:#fff;border:1px solid #d4d4d4;border-radius:5px;box-sizing:border-box"></div>
<svg class="b" style="left:34px;top:143px" width="18" height="18" viewBox="0 0 18 18">
    <rect x="0.3" y="0.3" width="17.4" height="17.4" rx="3" fill="#4aa5e0"/>
    <circle cx="8.1" cy="8.3" r="5.4" fill="none" stroke="#cfe8f7" stroke-width="1.4"/>
    <path d="M12 12 L15.2 15" stroke="#d8ecf8" stroke-width="1.8" stroke-linecap="round"/>
    </svg>
<div class="t " style="left:53.80px;top:141.95px;font-size:14.0px;font-weight:400;color:#333;">Enable Filter</div>
<div class="b" style="left:149px;top:136px;width:172px;height:32px;background:#fff;border:1px solid #d4d4d4;border-radius:5px;box-sizing:border-box"></div>
<svg class="b" style="left:164px;top:145px" width="11" height="13" viewBox="0 0 11 13">
    <path d="M0.5 6.3 Q0.6 1.2 5.2 0.9 Q6.3 0.9 7 1.4 L9.8 0.6 V6.1 H4.6 L6.1 4.3 Q5.4 3.7 4.8 3.8 Q3 4 2.8 6.3 Z" fill="#0d9c14"/>
    <path d="M9.8 6.6 Q9.7 11.7 5.1 12 Q4 12 3.3 11.5 L0.5 12.3 V6.8 H5.7 L4.2 8.6 Q4.9 9.2 5.5 9.1 Q7.3 8.9 7.5 6.6 Z" fill="#0d9c14"/>
    </svg>
<div class="t " style="left:178.00px;top:141.95px;font-size:14.0px;font-weight:400;color:#333;">Restore Default View</div>
<div class="b" style="left:14px;top:177px;width:1508px;height:49px;background:#f4f4f4;border-left:1px solid #e2e2e2;border-right:1px solid #e6e6e6;box-sizing:border-box"></div>
<div class="b" style="left:24px;top:186px;width:90px;height:30px;background:#f4f4f4;border:1px solid #dcdcdc;box-sizing:border-box"></div>
<div class="t " style="left:31.20px;top:191.04px;font-size:12.3px;font-weight:400;color:#444;">Module</div>
<svg class="b" style="left:85px;top:199px" width="8" height="6" viewBox="0 0 8 6"><path d="M0.5 5.4 H7.3 L3.9 0.3 Z" fill="#333"/></svg>
<div class="b" style="left:14px;top:225px;width:1508px;height:788px;background:#fff;border:1px solid #dcdcdc;border-right-color:#b8b8b8;border-bottom-color:#b8b8b8;box-sizing:border-box;box-shadow:1px 1px 1px rgba(0,0,0,0.12)"></div>
<div class="b" style="left:15px;top:226px;width:1506px;height:44px;background:#f4f4f4"></div>
<div class="b" style="left:56px;top:227px;width:1px;height:43px;background:#e2e2e2"></div>
<div class="b" style="left:64px;top:234px;width:146px;height:29px;background:#fff;border:1px solid #dcdcdc;border-radius:4px;box-sizing:border-box"></div>
<div class="b" style="left:93px;top:235px;width:1px;height:27px;background:#e4e4e4"></div>
<div class="b" style="left:122px;top:235px;width:1px;height:27px;background:#e4e4e4"></div>
<div class="b" style="left:152px;top:235px;width:1px;height:27px;background:#e4e4e4"></div>
<div class="b" style="left:180px;top:235px;width:1px;height:27px;background:#e4e4e4"></div>
<div class="b" style="left:122px;top:234px;width:30px;height:29px;background:#337ab7"></div>
<svg class="b" style="left:75px;top:245.0px" width="8" height="7" viewBox="0 0 8 7"><rect x="0.3" y="0.5" width="1.5" height="6" fill="#333"/><path d="M7.3 0.5 V6.5 L2 3.5 Z" fill="#333"/></svg>
<svg class="b" style="left:104px;top:245.0px" width="8" height="7" viewBox="0 0 8 7"><path d="M6.5 0.5 V6.5 L1 3.5 Z" fill="#333"/></svg>
<svg class="b" style="left:162.5px;top:245.0px" width="8" height="7" viewBox="0 0 8 7"><path d="M1 0.5 V6.5 L6.5 3.5 Z" fill="#333"/></svg>
<svg class="b" style="left:191.5px;top:245.0px" width="9" height="7" viewBox="0 0 9 7"><path d="M0.7 0.5 V6.5 L6 3.5 Z" fill="#333"/><rect x="6.2" y="0.5" width="1.5" height="6" fill="#333"/></svg>
<div class="t" style="left:37.50px;width:200px;text-align:center;top:239.04px;font-size:12.3px;font-weight:400;color:#fff;">1</div>
<div class="t " style="left:651.40px;top:239.04px;font-size:12.3px;font-weight:400;color:#333;">Page:</div>
<div class="b" style="left:693px;top:234px;width:45px;height:29px;background:#fff;border:1px solid #dcdcdc;border-radius:4px;box-sizing:border-box"></div>
<div class="t" style="left:615.90px;width:200px;text-align:center;top:239.04px;font-size:12.3px;font-weight:400;color:#333;">1</div>
<div class="t " style="left:747.00px;top:239.04px;font-size:12.3px;font-weight:400;color:#333;">of 1</div>
<div class="b" style="left:781px;top:234px;width:30px;height:29px;background:#fff;border:1px solid #dcdcdc;border-radius:4px;box-sizing:border-box"></div>
<div class="t" style="left:696.40px;width:200px;text-align:center;top:239.04px;font-size:12.3px;font-weight:400;color:#333;">Go</div>
<div class="t " style="left:817.20px;top:239.04px;font-size:12.3px;font-weight:400;color:#333;">Page size:</div>
<div class="b" style="left:885px;top:234px;width:35px;height:29px;background:#fff;border:1px solid #dcdcdc;border-radius:4px;box-sizing:border-box"></div>
<div class="t" style="left:802.60px;width:200px;text-align:center;top:239.04px;font-size:12.3px;font-weight:400;color:#333;">25</div>
<div class="b" style="left:923px;top:234px;width:58px;height:29px;background:#fff;border:1px solid #dcdcdc;border-radius:4px;box-sizing:border-box"></div>
<div class="t" style="left:852.40px;width:200px;text-align:center;top:239.04px;font-size:12.3px;font-weight:400;color:#333;">Change</div>
<div class="t" style="right:20.60px;top:239.00px;font-size:12.4px;font-weight:400;color:#333;">Item 1 to 25 of 25</div>
<div class="b" style="left:15px;top:270px;width:1506px;height:1px;background:#dcdcdc"></div>
<div class="b" style="left:15px;top:271px;width:1506px;height:37px;background:#f4f4f4"></div>
<div class="b" style="left:112px;top:271px;width:245px;height:37px;background:#e1e1e1"></div>
<div class="b" style="left:51px;top:271px;width:1px;height:37px;background:#e3e3e3"></div>
<div class="b" style="left:357px;top:271px;width:1px;height:37px;background:#e3e3e3"></div>
<div class="b" style="left:687px;top:271px;width:1px;height:37px;background:#e3e3e3"></div>
<div class="b" style="left:1395px;top:271px;width:1px;height:37px;background:#e3e3e3"></div>
<div class="b" style="left:15px;top:308px;width:1506px;height:1px;background:#dadada"></div>
<div class="t " style="left:59.00px;top:280.64px;font-size:12.3px;font-weight:700;color:#333;">Severity</div>
<div class="t " style="left:119.60px;top:280.64px;font-size:12.3px;font-weight:700;color:#333;">Module</div>
<svg class="b" style="left:176px;top:287px" width="8" height="6" viewBox="0 0 8 6"><path d="M0.5 0.5 H7.5 L4 5.6 Z" fill="#333"/></svg>
<div class="t " style="left:363.80px;top:280.64px;font-size:12.3px;font-weight:700;color:#333;">Asset Name</div>
<div class="t " style="left:693.80px;top:280.64px;font-size:12.3px;font-weight:700;color:#333;">Alert</div>
<div class="t " style="left:1401.80px;top:280.64px;font-size:12.3px;font-weight:700;color:#333;">Expiration</div>
<div class="b" style="left:15px;top:309px;width:36px;height:658px;background:#fafafa"></div>
<div class="b" style="left:52px;top:309px;width:1469px;height:41px;background:#fff"></div>
<div class="b" style="left:52px;top:350px;width:1469px;height:1px;background:#e6e6e6"></div>
<svg class="b" style="left:30.4px;top:326.2px" width="7" height="6" viewBox="0 0 7 6"><path d="M0.3 0.3 H6.7 L3.5 5.5 Z" fill="#428bca"/></svg>
<div class="t " style="left:60.20px;top:320.13px;font-size:12.33px;font-weight:400;color:#3a3a3a;">Module: Asset License</div>
<div class="b" style="left:52px;top:351px;width:1469px;height:34px;background:#fff"></div>
<div class="b" style="left:112px;top:351px;width:245px;height:34px;background:#e1e1e1"></div>
<div class="b" style="left:51px;top:350px;width:1px;height:35px;background:#e6e6e6"></div>
<div class="b" style="left:357px;top:350px;width:1px;height:35px;background:#e6e6e6"></div>
<div class="b" style="left:687px;top:350px;width:1px;height:35px;background:#e6e6e6"></div>
<div class="b" style="left:1395px;top:350px;width:1px;height:35px;background:#e6e6e6"></div>
<div class="b" style="left:52px;top:385px;width:1469px;height:1px;background:#e8e8e8"></div>
<svg class="b" style="left:75.4px;top:359.0px" width="13" height="13" viewBox="0 0 13 13"><circle cx="6.5" cy="6.5" r="6" fill="#ff0000"/><path d="M4.3 4.3 L8.7 8.7 M8.7 4.3 L4.3 8.7" stroke="#ffe8e8" stroke-width="1.4"/></svg>
<div class="t " style="left:119.40px;top:358.03px;font-size:12.33px;font-weight:400;color:#3a3a3a;">Asset License</div>
<div class="t " style="left:364.30px;top:358.03px;font-size:12.33px;font-weight:400;color:#3a3a3a;">2002 Ford F350</div>
<div class="t " style="left:694.30px;top:358.03px;font-size:12.33px;font-weight:400;color:#3a3a3a;">License "License" Expiring in 14 Day(s)</div>
<div class="t " style="left:1402.00px;top:358.03px;font-size:12.33px;font-weight:400;color:#3a3a3a;">02/01/2023</div>
<div class="b" style="left:52px;top:386px;width:1469px;height:35px;background:#f9f9f9"></div>
<div class="b" style="left:112px;top:386px;width:245px;height:35px;background:#ebebeb"></div>
<div class="b" style="left:51px;top:385px;width:1px;height:36px;background:#e6e6e6"></div>
<div class="b" style="left:357px;top:385px;width:1px;height:36px;background:#e6e6e6"></div>
<div class="b" style="left:687px;top:385px;width:1px;height:36px;background:#e6e6e6"></div>
<div class="b" style="left:1395px;top:385px;width:1px;height:36px;background:#e6e6e6"></div>
<div class="b" style="left:52px;top:421px;width:1469px;height:1px;background:#e8e8e8"></div>
<svg class="b" style="left:75.4px;top:394.5px" width="13" height="13" viewBox="0 0 13 13"><circle cx="6.5" cy="6.5" r="6" fill="#ff0000"/><path d="M4.3 4.3 L8.7 8.7 M8.7 4.3 L4.3 8.7" stroke="#ffe8e8" stroke-width="1.4"/></svg>
<div class="t " style="left:119.40px;top:393.53px;font-size:12.33px;font-weight:400;color:#3a3a3a;">Asset License</div>
<div class="t " style="left:364.30px;top:393.53px;font-size:12.33px;font-weight:400;color:#3a3a3a;">2010 Leader Old Press Trailer</div>
<div class="t " style="left:694.30px;top:393.53px;font-size:12.33px;font-weight:400;color:#3a3a3a;">License "License" Expiring in 14 Day(s)</div>
<div class="t " style="left:1402.00px;top:393.53px;font-size:12.33px;font-weight:400;color:#3a3a3a;">02/01/2023</div>
<div class="b" style="left:52px;top:422px;width:1469px;height:34px;background:#fff"></div>
<div class="b" style="left:112px;top:422px;width:245px;height:34px;background:#e1e1e1"></div>
<div class="b" style="left:51px;top:421px;width:1px;height:35px;background:#e6e6e6"></div>
<div class="b" style="left:357px;top:421px;width:1px;height:35px;background:#e6e6e6"></div>
<div class="b" style="left:687px;top:421px;width:1px;height:35px;background:#e6e6e6"></div>
<div class="b" style="left:1395px;top:421px;width:1px;height:35px;background:#e6e6e6"></div>
<div class="b" style="left:52px;top:456px;width:1469px;height:1px;background:#e8e8e8"></div>
<svg class="b" style="left:75.4px;top:430.0px" width="13" height="13" viewBox="0 0 13 13"><circle cx="6.5" cy="6.5" r="6" fill="#ff0000"/><path d="M4.3 4.3 L8.7 8.7 M8.7 4.3 L4.3 8.7" stroke="#ffe8e8" stroke-width="1.4"/></svg>
<div class="t " style="left:119.40px;top:429.03px;font-size:12.33px;font-weight:400;color:#3a3a3a;">Asset License</div>
<div class="t " style="left:364.30px;top:429.03px;font-size:12.33px;font-weight:400;color:#3a3a3a;">2012 Dodge 5500</div>
<div class="t " style="left:694.30px;top:429.03px;font-size:12.33px;font-weight:400;color:#3a3a3a;">License "License" Expiring in 14 Day(s)</div>
<div class="t " style="left:1402.00px;top:429.03px;font-size:12.33px;font-weight:400;color:#3a3a3a;">02/01/2023</div>
<div class="b" style="left:52px;top:457px;width:1469px;height:41px;background:#fff"></div>
<div class="b" style="left:52px;top:498px;width:1469px;height:1px;background:#e6e6e6"></div>
<svg class="b" style="left:30.4px;top:474.7px" width="7" height="6" viewBox="0 0 7 6"><path d="M0.3 0.3 H6.7 L3.5 5.5 Z" fill="#428bca"/></svg>
<div class="t " style="left:60.20px;top:468.63px;font-size:12.33px;font-weight:400;color:#3a3a3a;">Module: DOT Requirements</div>
<div class="b" style="left:52px;top:499px;width:1469px;height:35px;background:#f9f9f9"></div>
<div class="b" style="left:112px;top:499px;width:245px;height:35px;background:#ebebeb"></div>
<div class="b" style="left:51px;top:498px;width:1px;height:36px;background:#e6e6e6"></div>
<div class="b" style="left:357px;top:498px;width:1px;height:36px;background:#e6e6e6"></div>
<div class="b" style="left:687px;top:498px;width:1px;height:36px;background:#e6e6e6"></div>
<div class="b" style="left:1395px;top:498px;width:1px;height:36px;background:#e6e6e6"></div>
<div class="b" style="left:52px;top:534px;width:1469px;height:1px;background:#e8e8e8"></div>
<svg class="b" style="left:75.4px;top:507.5px" width="13" height="13" viewBox="0 0 13 13"><circle cx="6.5" cy="6.5" r="6" fill="#ff0000"/><path d="M4.3 4.3 L8.7 8.7 M8.7 4.3 L4.3 8.7" stroke="#ffe8e8" stroke-width="1.4"/></svg>
<div class="t " style="left:119.40px;top:506.53px;font-size:12.33px;font-weight:400;color:#3a3a3a;">DOT Requirements</div>
<div class="t " style="left:364.30px;top:506.53px;font-size:12.33px;font-weight:400;color:#3a3a3a;">2012 Dodge 5500</div>
<div class="t " style="left:694.30px;top:506.53px;font-size:12.33px;font-weight:400;color:#3a3a3a;">DOT Inspection Past Due</div>
<div class="t " style="left:1402.00px;top:506.53px;font-size:12.33px;font-weight:400;color:#3a3a3a;">12/22/2022</div>
<div class="b" style="left:52px;top:535px;width:1469px;height:34px;background:#fff"></div>
<div class="b" style="left:112px;top:535px;width:245px;height:34px;background:#e1e1e1"></div>
<div class="b" style="left:51px;top:534px;width:1px;height:35px;background:#e6e6e6"></div>
<div class="b" style="left:357px;top:534px;width:1px;height:35px;background:#e6e6e6"></div>
<div class="b" style="left:687px;top:534px;width:1px;height:35px;background:#e6e6e6"></div>
<div class="b" style="left:1395px;top:534px;width:1px;height:35px;background:#e6e6e6"></div>
<div class="b" style="left:52px;top:569px;width:1469px;height:1px;background:#e8e8e8"></div>
<svg class="b" style="left:75.80000000000001px;top:543.6px" width="13" height="12" viewBox="0 0 13 12"><path d="M6 0.6 Q6.8 0.6 7.3 1.5 L11.6 9.2 Q12.4 10.9 10.6 10.9 H1.4 Q-0.4 10.9 0.4 9.2 L4.7 1.5 Q5.2 0.6 6 0.6 Z" fill="#e0e000"/><rect x="5.5" y="3.6" width="1" height="3.6" fill="#e8e860"/></svg>
<div class="t " style="left:119.40px;top:542.03px;font-size:12.33px;font-weight:400;color:#3a3a3a;">DOT Requirements</div>
<div class="t " style="left:364.30px;top:542.03px;font-size:12.33px;font-weight:400;color:#3a3a3a;">2012 International 4000</div>
<div class="t " style="left:694.30px;top:542.03px;font-size:12.33px;font-weight:400;color:#3a3a3a;">DOT Inspection Due in 23 Day(s)</div>
<div class="t " style="left:1402.00px;top:542.03px;font-size:12.33px;font-weight:400;color:#3a3a3a;">02/10/2023</div>
<div class="b" style="left:52px;top:570px;width:1469px;height:35px;background:#f9f9f9"></div>
<div class="b" style="left:112px;top:570px;width:245px;height:35px;background:#ebebeb"></div>
<div class="b" style="left:51px;top:569px;width:1px;height:36px;background:#e6e6e6"></div>
<div class="b" style="left:357px;top:569px;width:1px;height:36px;background:#e6e6e6"></div>
<div class="b" style="left:687px;top:569px;width:1px;height:36px;background:#e6e6e6"></div>
<div class="b" style="left:1395px;top:569px;width:1px;height:36px;background:#e6e6e6"></div>
<div class="b" style="left:52px;top:605px;width:1469px;height:1px;background:#e8e8e8"></div>
<svg class="b" style="left:75.80000000000001px;top:579.1px" width="13" height="12" viewBox="0 0 13 12"><path d="M6 0.6 Q6.8 0.6 7.3 1.5 L11.6 9.2 Q12.4 10.9 10.6 10.9 H1.4 Q-0.4 10.9 0.4 9.2 L4.7 1.5 Q5.2 0.6 6 0.6 Z" fill="#e0e000"/><rect x="5.5" y="3.6" width="1" height="3.6" fill="#e8e860"/></svg>
<div class="t " style="left:119.40px;top:577.53px;font-size:12.33px;font-weight:400;color:#3a3a3a;">DOT Requirements</div>
<div class="t " style="left:364.30px;top:577.53px;font-size:12.33px;font-weight:400;color:#3a3a3a;">2015 Hino 338</div>
<div class="t " style="left:694.30px;top:577.53px;font-size:12.33px;font-weight:400;color:#3a3a3a;">DOT Inspection Due in 23 Day(s)</div>
<div class="t " style="left:1402.00px;top:577.53px;font-size:12.33px;font-weight:400;color:#3a3a3a;">02/10/2023</div>
<div class="b" style="left:52px;top:606px;width:1469px;height:34px;background:#fff"></div>
<div class="b" style="left:112px;top:606px;width:245px;height:34px;background:#e1e1e1"></div>
<div class="b" style="left:51px;top:605px;width:1px;height:35px;background:#e6e6e6"></div>
<div class="b" style="left:357px;top:605px;width:1px;height:35px;background:#e6e6e6"></div>
<div class="b" style="left:687px;top:605px;width:1px;height:35px;background:#e6e6e6"></div>
<div class="b" style="left:1395px;top:605px;width:1px;height:35px;background:#e6e6e6"></div>
<div class="b" style="left:52px;top:640px;width:1469px;height:1px;background:#e8e8e8"></div>
<svg class="b" style="left:75.80000000000001px;top:614.6px" width="13" height="12" viewBox="0 0 13 12"><path d="M6 0.6 Q6.8 0.6 7.3 1.5 L11.6 9.2 Q12.4 10.9 10.6 10.9 H1.4 Q-0.4 10.9 0.4 9.2 L4.7 1.5 Q5.2 0.6 6 0.6 Z" fill="#e0e000"/><rect x="5.5" y="3.6" width="1" height="3.6" fill="#e8e860"/></svg>
<div class="t " style="left:119.40px;top:613.03px;font-size:12.33px;font-weight:400;color:#3a3a3a;">DOT Requirements</div>
<div class="t " style="left:364.30px;top:613.03px;font-size:12.33px;font-weight:400;color:#3a3a3a;">2020 Chevy SIlverado</div>
<div class="t " style="left:694.30px;top:613.03px;font-size:12.33px;font-weight:400;color:#3a3a3a;">DOT Inspection Due in 41 Day(s)</div>
<div class="t " style="left:1402.00px;top:613.03px;font-size:12.33px;font-weight:400;color:#3a3a3a;">02/28/2023</div>
<div class="b" style="left:52px;top:641px;width:1469px;height:41px;background:#fff"></div>
<div class="b" style="left:52px;top:682px;width:1469px;height:1px;background:#e6e6e6"></div>
<svg class="b" style="left:30.4px;top:658.7px" width="7" height="6" viewBox="0 0 7 6"><path d="M0.3 0.3 H6.7 L3.5 5.5 Z" fill="#428bca"/></svg>
<div class="t " style="left:60.20px;top:652.63px;font-size:12.33px;font-weight:400;color:#3a3a3a;">Module: Preventive Maintenance</div>
<div class="b" style="left:52px;top:683px;width:1469px;height:35px;background:#f9f9f9"></div>
<div class="b" style="left:112px;top:683px;width:245px;height:35px;background:#ebebeb"></div>
<div class="b" style="left:51px;top:682px;width:1px;height:36px;background:#e6e6e6"></div>
<div class="b" style="left:357px;top:682px;width:1px;height:36px;background:#e6e6e6"></div>
<div class="b" style="left:687px;top:682px;width:1px;height:36px;background:#e6e6e6"></div>
<div class="b" style="left:1395px;top:682px;width:1px;height:36px;background:#e6e6e6"></div>
<div class="b" style="left:52px;top:718px;width:1469px;height:1px;background:#e8e8e8"></div>
<svg class="b" style="left:75.4px;top:691.5px" width="13" height="13" viewBox="0 0 13 13"><circle cx="6.5" cy="6.5" r="6" fill="#ff0000"/><path d="M4.3 4.3 L8.7 8.7 M8.7 4.3 L4.3 8.7" stroke="#ffe8e8" stroke-width="1.4"/></svg>
<div class="t " style="left:119.40px;top:690.53px;font-size:12.33px;font-weight:400;color:#3a3a3a;">Preventive Maintenance</div>
<div class="t " style="left:364.30px;top:690.53px;font-size:12.33px;font-weight:400;color:#3a3a3a;">2011 Ford F250</div>
<div class="t " style="left:694.30px;top:690.53px;font-size:12.33px;font-weight:400;color:#3a3a3a;">Preventative Maintenance "pm" Date Expired</div>
<div class="t " style="left:1402.00px;top:690.53px;font-size:12.33px;font-weight:400;color:#3a3a3a;">12/01/2022</div>
<div class="b" style="left:52px;top:719px;width:1469px;height:34px;background:#fff"></div>
<div class="b" style="left:112px;top:719px;width:245px;height:34px;background:#e1e1e1"></div>
<div class="b" style="left:51px;top:718px;width:1px;height:35px;background:#e6e6e6"></div>
<div class="b" style="left:357px;top:718px;width:1px;height:35px;background:#e6e6e6"></div>
<div class="b" style="left:687px;top:718px;width:1px;height:35px;background:#e6e6e6"></div>
<div class="b" style="left:1395px;top:718px;width:1px;height:35px;background:#e6e6e6"></div>
<div class="b" style="left:52px;top:753px;width:1469px;height:1px;background:#e8e8e8"></div>
<svg class="b" style="left:75.4px;top:727.0px" width="13" height="13" viewBox="0 0 13 13"><circle cx="6.5" cy="6.5" r="6" fill="#ff0000"/><path d="M4.3 4.3 L8.7 8.7 M8.7 4.3 L4.3 8.7" stroke="#ffe8e8" stroke-width="1.4"/></svg>
<div class="t " style="left:119.40px;top:726.03px;font-size:12.33px;font-weight:400;color:#3a3a3a;">Preventive Maintenance</div>
<div class="t " style="left:364.30px;top:726.03px;font-size:12.33px;font-weight:400;color:#3a3a3a;">2012 Dodge 5500</div>
<div class="t " style="left:694.30px;top:726.03px;font-size:12.33px;font-weight:400;color:#3a3a3a;">Preventative Maintenance "PM oil change" Date Expired</div>
<div class="t " style="left:1402.00px;top:726.03px;font-size:12.33px;font-weight:400;color:#3a3a3a;">12/01/2022</div>
<div class="b" style="left:52px;top:754px;width:1469px;height:35px;background:#f9f9f9"></div>
<div class="b" style="left:112px;top:754px;width:245px;height:35px;background:#ebebeb"></div>
<div class="b" style="left:51px;top:753px;width:1px;height:36px;background:#e6e6e6"></div>
<div class="b" style="left:357px;top:753px;width:1px;height:36px;background:#e6e6e6"></div>
<div class="b" style="left:687px;top:753px;width:1px;height:36px;background:#e6e6e6"></div>
<div class="b" style="left:1395px;top:753px;width:1px;height:36px;background:#e6e6e6"></div>
<div class="b" style="left:52px;top:789px;width:1469px;height:1px;background:#e8e8e8"></div>
<svg class="b" style="left:75.4px;top:762.5px" width="13" height="13" viewBox="0 0 13 13"><circle cx="6.5" cy="6.5" r="6" fill="#ff0000"/><path d="M4.3 4.3 L8.7 8.7 M8.7 4.3 L4.3 8.7" stroke="#ffe8e8" stroke-width="1.4"/></svg>
<div class="t " style="left:119.40px;top:761.53px;font-size:12.33px;font-weight:400;color:#3a3a3a;">Preventive Maintenance</div>
<div class="t " style="left:364.30px;top:761.53px;font-size:12.33px;font-weight:400;color:#3a3a3a;">2015 Linde H30T</div>
<div class="t " style="left:694.30px;top:761.53px;font-size:12.33px;font-weight:400;color:#3a3a3a;">Preventative Maintenance "PM" Date Expired</div>
<div class="t " style="left:1402.00px;top:761.53px;font-size:12.33px;font-weight:400;color:#3a3a3a;">01/06/2023</div>
<div class="b" style="left:52px;top:790px;width:1469px;height:34px;background:#fff"></div>
<div class="b" style="left:112px;top:790px;width:245px;height:34px;background:#e1e1e1"></div>
<div class="b" style="left:51px;top:789px;width:1px;height:35px;background:#e6e6e6"></div>
<div class="b" style="left:357px;top:789px;width:1px;height:35px;background:#e6e6e6"></div>
<div class="b" style="left:687px;top:789px;width:1px;height:35px;background:#e6e6e6"></div>
<div class="b" style="left:1395px;top:789px;width:1px;height:35px;background:#e6e6e6"></div>
<div class="b" style="left:52px;top:824px;width:1469px;height:1px;background:#e8e8e8"></div>
<svg class="b" style="left:75.4px;top:798.0px" width="13" height="13" viewBox="0 0 13 13"><circle cx="6.5" cy="6.5" r="6" fill="#ff0000"/><path d="M4.3 4.3 L8.7 8.7 M8.7 4.3 L4.3 8.7" stroke="#ffe8e8" stroke-width="1.4"/></svg>
<div class="t " style="left:119.40px;top:797.03px;font-size:12.33px;font-weight:400;color:#3a3a3a;">Preventive Maintenance</div>
<div class="t " style="left:364.30px;top:797.03px;font-size:12.33px;font-weight:400;color:#3a3a3a;">2016 Ford F250</div>
<div class="t " style="left:694.30px;top:797.03px;font-size:12.33px;font-weight:400;color:#3a3a3a;">Preventative Maintenance "pm" Date Expired</div>
<div class="t " style="left:1402.00px;top:797.03px;font-size:12.33px;font-weight:400;color:#3a3a3a;">12/01/2022</div>
<div class="b" style="left:52px;top:825px;width:1469px;height:35px;background:#f9f9f9"></div>
<div class="b" style="left:112px;top:825px;width:245px;height:35px;background:#ebebeb"></div>
<div class="b" style="left:51px;top:824px;width:1px;height:36px;background:#e6e6e6"></div>
<div class="b" style="left:357px;top:824px;width:1px;height:36px;background:#e6e6e6"></div>
<div class="b" style="left:687px;top:824px;width:1px;height:36px;background:#e6e6e6"></div>
<div class="b" style="left:1395px;top:824px;width:1px;height:36px;background:#e6e6e6"></div>
<div class="b" style="left:52px;top:860px;width:1469px;height:1px;background:#e8e8e8"></div>
<svg class="b" style="left:75.4px;top:833.5px" width="13" height="13" viewBox="0 0 13 13"><circle cx="6.5" cy="6.5" r="6" fill="#ff0000"/><path d="M4.3 4.3 L8.7 8.7 M8.7 4.3 L4.3 8.7" stroke="#ffe8e8" stroke-width="1.4"/></svg>
<div class="t " style="left:119.40px;top:832.53px;font-size:12.33px;font-weight:400;color:#3a3a3a;">Preventive Maintenance</div>
<div class="t " style="left:364.30px;top:832.53px;font-size:12.33px;font-weight:400;color:#3a3a3a;">2020 Chevy 3500</div>
<div class="t " style="left:694.30px;top:832.53px;font-size:12.33px;font-weight:400;color:#3a3a3a;">Preventative Maintenance "pm oil change" Date Expired</div>
<div class="t " style="left:1402.00px;top:832.53px;font-size:12.33px;font-weight:400;color:#3a3a3a;">12/27/2022</div>
<div class="b" style="left:52px;top:861px;width:1469px;height:34px;background:#fff"></div>
<div class="b" style="left:112px;top:861px;width:245px;height:34px;background:#e1e1e1"></div>
<div class="b" style="left:51px;top:860px;width:1px;height:35px;background:#e6e6e6"></div>
<div class="b" style="left:357px;top:860px;width:1px;height:35px;background:#e6e6e6"></div>
<div class="b" style="left:687px;top:860px;width:1px;height:35px;background:#e6e6e6"></div>
<div class="b" style="left:1395px;top:860px;width:1px;height:35px;background:#e6e6e6"></div>
<div class="b" style="left:52px;top:895px;width:1469px;height:1px;background:#e8e8e8"></div>
<svg class="b" style="left:75.4px;top:869.0px" width="13" height="13" viewBox="0 0 13 13"><circle cx="6.5" cy="6.5" r="6" fill="#ff0000"/><path d="M4.3 4.3 L8.7 8.7 M8.7 4.3 L4.3 8.7" stroke="#ffe8e8" stroke-width="1.4"/></svg>
<div class="t " style="left:119.40px;top:868.03px;font-size:12.33px;font-weight:400;color:#3a3a3a;">Preventive Maintenance</div>
<div class="t " style="left:364.30px;top:868.03px;font-size:12.33px;font-weight:400;color:#3a3a3a;">2020 Chevy SIlverado</div>
<div class="t " style="left:694.30px;top:868.03px;font-size:12.33px;font-weight:400;color:#3a3a3a;">Preventative Maintenance "PM oil change" Date Expired</div>
<div class="t " style="left:1402.00px;top:868.03px;font-size:12.33px;font-weight:400;color:#3a3a3a;">12/01/2022</div>
<div class="b" style="left:52px;top:896px;width:1469px;height:35px;background:#f9f9f9"></div>
<div class="b" style="left:112px;top:896px;width:245px;height:35px;background:#ebebeb"></div>
<div class="b" style="left:51px;top:895px;width:1px;height:36px;background:#e6e6e6"></div>
<div class="b" style="left:357px;top:895px;width:1px;height:36px;background:#e6e6e6"></div>
<div class="b" style="left:687px;top:895px;width:1px;height:36px;background:#e6e6e6"></div>
<div class="b" style="left:1395px;top:895px;width:1px;height:36px;background:#e6e6e6"></div>
<div class="b" style="left:52px;top:931px;width:1469px;height:1px;background:#e8e8e8"></div>
<svg class="b" style="left:75.4px;top:904.5px" width="13" height="13" viewBox="0 0 13 13"><circle cx="6.5" cy="6.5" r="6" fill="#ff0000"/><path d="M4.3 4.3 L8.7 8.7 M8.7 4.3 L4.3 8.7" stroke="#ffe8e8" stroke-width="1.4"/></svg>
<div class="t " style="left:119.40px;top:903.53px;font-size:12.33px;font-weight:400;color:#3a3a3a;">Preventive Maintenance</div>
<div class="t " style="left:364.30px;top:903.53px;font-size:12.33px;font-weight:400;color:#3a3a3a;">2021 Chevy Silverado</div>
<div class="t " style="left:694.30px;top:903.53px;font-size:12.33px;font-weight:400;color:#3a3a3a;">Preventative Maintenance "Quarterly PM Svc" Date Expired</div>
<div class="t " style="left:1402.00px;top:903.53px;font-size:12.33px;font-weight:400;color:#3a3a3a;">12/01/2022</div>
<div class="b" style="left:52px;top:932px;width:1469px;height:34px;background:#fff"></div>
<div class="b" style="left:112px;top:932px;width:245px;height:34px;background:#e1e1e1"></div>
<div class="b" style="left:51px;top:931px;width:1px;height:35px;background:#e6e6e6"></div>
<div class="b" style="left:357px;top:931px;width:1px;height:35px;background:#e6e6e6"></div>
<div class="b" style="left:687px;top:931px;width:1px;height:35px;background:#e6e6e6"></div>
<div class="b" style="left:1395px;top:931px;width:1px;height:35px;background:#e6e6e6"></div>
<div class="b" style="left:52px;top:966px;width:1469px;height:1px;background:#e8e8e8"></div>
<svg class="b" style="left:75.4px;top:940.0px" width="13" height="13" viewBox="0 0 13 13"><circle cx="6.5" cy="6.5" r="6" fill="#ff0000"/><path d="M4.3 4.3 L8.7 8.7 M8.7 4.3 L4.3 8.7" stroke="#ffe8e8" stroke-width="1.4"/></svg>
<div class="t " style="left:119.40px;top:939.03px;font-size:12.33px;font-weight:400;color:#3a3a3a;">Preventive Maintenance</div>
<div class="t " style="left:364.30px;top:939.03px;font-size:12.33px;font-weight:400;color:#3a3a3a;">2015 Linde H30T</div>
<div class="t " style="left:694.30px;top:939.03px;font-size:12.33px;font-weight:400;color:#3a3a3a;">Preventative Maintenance "Annual safety Inspection" Expiring in 35 Day(s)</div>
<div class="t " style="left:1402.00px;top:939.03px;font-size:12.33px;font-weight:400;color:#3a3a3a;">02/22/2023</div>
<div class="b" style="left:15px;top:967px;width:1506px;height:45px;background:#f4f4f4"></div>
<div class="b" style="left:56px;top:968px;width:1px;height:44px;background:#e2e2e2"></div>
<div class="b" style="left:64px;top:975px;width:146px;height:29px;background:#fff;border:1px solid #dcdcdc;border-radius:4px;box-sizing:border-box"></div>
<div class="b" style="left:93px;top:976px;width:1px;height:27px;background:#e4e4e4"></div>
<div class="b" style="left:122px;top:976px;width:1px;height:27px;background:#e4e4e4"></div>
<div class="b" style="left:152px;top:976px;width:1px;height:27px;background:#e4e4e4"></div>
<div class="b" style="left:180px;top:976px;width:1px;height:27px;background:#e4e4e4"></div>
<div class="b" style="left:122px;top:975px;width:30px;height:29px;background:#337ab7"></div>
<svg class="b" style="left:75px;top:986.0px" width="8" height="7" viewBox="0 0 8 7"><rect x="0.3" y="0.5" width="1.5" height="6" fill="#333"/><path d="M7.3 0.5 V6.5 L2 3.5 Z" fill="#333"/></svg>
<svg class="b" style="left:104px;top:986.0px" width="8" height="7" viewBox="0 0 8 7"><path d="M6.5 0.5 V6.5 L1 3.5 Z" fill="#333"/></svg>
<svg class="b" style="left:162.5px;top:986.0px" width="8" height="7" viewBox="0 0 8 7"><path d="M1 0.5 V6.5 L6.5 3.5 Z" fill="#333"/></svg>
<svg class="b" style="left:191.5px;top:986.0px" width="9" height="7" viewBox="0 0 9 7"><path d="M0.7 0.5 V6.5 L6 3.5 Z" fill="#333"/><rect x="6.2" y="0.5" width="1.5" height="6" fill="#333"/></svg>
<div class="t" style="left:37.50px;width:200px;text-align:center;top:980.04px;font-size:12.3px;font-weight:400;color:#fff;">1</div>
<div class="t " style="left:651.40px;top:980.04px;font-size:12.3px;font-weight:400;color:#333;">Page:</div>
<div class="b" style="left:693px;top:975px;width:45px;height:29px;background:#fff;border:1px solid #dcdcdc;border-radius:4px;box-sizing:border-box"></div>
<div class="t" style="left:615.90px;width:200px;text-align:center;top:980.04px;font-size:12.3px;font-weight:400;color:#333;">1</div>
<div class="t " style="left:747.00px;top:980.04px;font-size:12.3px;font-weight:400;color:#333;">of 1</div>
<div class="b" style="left:781px;top:975px;width:30px;height:29px;background:#fff;border:1px solid #dcdcdc;border-radius:4px;box-sizing:border-box"></div>
<div class="t" style="left:696.40px;width:200px;text-align:center;top:980.04px;font-size:12.3px;font-weight:400;color:#333;">Go</div>
<div class="t " style="left:817.20px;top:980.04px;font-size:12.3px;font-weight:400;color:#333;">Page size:</div>
<div class="b" style="left:885px;top:975px;width:35px;height:29px;background:#fff;border:1px solid #dcdcdc;border-radius:4px;box-sizing:border-box"></div>
<div class="t" style="left:802.60px;width:200px;text-align:center;top:980.04px;font-size:12.3px;font-weight:400;color:#333;">25</div>
<div class="b" style="left:923px;top:975px;width:58px;height:29px;background:#fff;border:1px solid #dcdcdc;border-radius:4px;box-sizing:border-box"></div>
<div class="t" style="left:852.40px;width:200px;text-align:center;top:980.04px;font-size:12.3px;font-weight:400;color:#333;">Change</div>
<div class="t" style="right:20.60px;top:980.00px;font-size:12.4px;font-weight:400;color:#333;">Item 1 to 25 of 25</div>
</div></div>
<div class="b" style="left:1448px;top:909px;width:42px;height:43px;border:1px solid rgba(0,0,0,0.07);border-radius:5px;box-sizing:border-box"></div>
<svg class="b" style="left:1455px;top:916px" width="28" height="30" viewBox="0 0 28 30"><path d="M3.5 3.8 H21.8 M13.5 6.5 V26 M5.8 14.8 L13.5 6.8 L21.2 15" fill="none" stroke="#d8d8d8" stroke-width="1.3"/></svg>
<div class="b" style="left:14px;top:1007px;width:1510px;height:11px;background:#fcfdfd"></div>
<div class="b" style="left:0;top:454px;width:2px;height:362px;background:#000"></div>
<div class="b" style="left:1534px;top:813px;width:2px;height:219px;background:#000"></div>
</body></html>
